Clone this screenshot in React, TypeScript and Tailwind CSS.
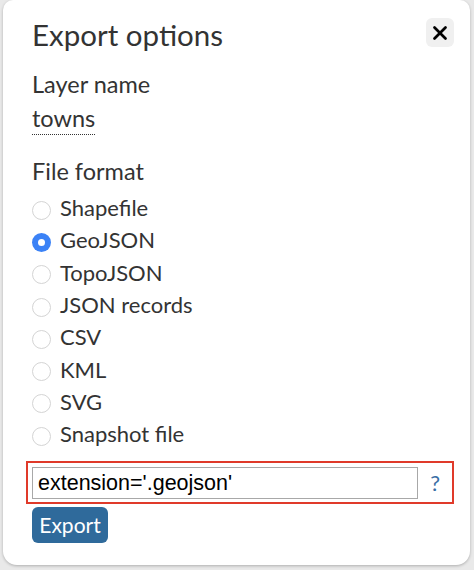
import { X } from "lucide-react";

const formats = [
  "Shapefile",
  "GeoJSON",
  "TopoJSON",
  "JSON records",
  "CSV",
  "KML",
  "SVG",
  "Snapshot file",
];

function Radio({ checked }: { checked: boolean }) {
  return checked ? (
    <span className="flex h-[19px] w-[19px] shrink-0 items-center justify-center rounded-full bg-[#3b82f6]">
      <span className="h-[7px] w-[7px] rounded-full bg-white" />
    </span>
  ) : (
    <span className="h-[19px] w-[19px] shrink-0 rounded-full border border-[#d4d4d4] bg-white" />
  );
}

export default function App() {
  return (
    <div className="h-[570px] w-[474px] overflow-hidden bg-[#e9e9e9] font-['Lato',sans-serif]">
      <div className="ml-[3px] flex h-[565px] w-[467px] flex-col rounded-b-[14px] rounded-t-[10px] bg-white pl-[29px] pr-[16px] shadow-[0_1px_3px_rgba(0,0,0,0.25)]">
        <div className="mt-[17px] flex items-start justify-between">
          <h1 className="text-[29.5px] leading-[36px] text-[#333]">Export options</h1>
          <button className="mt-[1px] flex h-[29px] w-[28px] items-center justify-center rounded-[6px] bg-[#f0f0f0]">
            <X className="h-[22px] w-[22px] text-black" strokeWidth={3} />
          </button>
        </div>

        <div className="mt-[17px] text-[23.5px] leading-[28px] text-[#333]">Layer name</div>
        <div className="mt-[7px] leading-[26px]">
          <span className="border-b border-dotted border-[#333] pb-[2px] text-[23.5px] leading-[26px] text-[#333]">
            towns
          </span>
        </div>

        <div className="mt-[23px] text-[23.5px] leading-[28px] text-[#333]">File format</div>
        <div className="mt-[9px] flex flex-col">
          {formats.map((f) => (
            <label key={f} className="flex h-[32.3px] items-center gap-[9px] text-[22px] text-[#333]">
              <Radio checked={f === "GeoJSON"} />
              <span className="pb-[5px]">{f}</span>
            </label>
          ))}
        </div>

        <div className="-ml-[6px] mt-[9px] flex h-[43px] w-[428px] items-center border-2 border-[#e03a2a] pl-[4px] pr-[12px]">
          <input
            readOnly
            value="extension='.geojson'"
            className="h-[32px] w-[386px] border border-[#a8a8a8] px-[5px] font-['Liberation_Sans',sans-serif] text-[21.5px] text-black outline-none"
          />
          <span className="ml-auto text-[22px] text-[#3a6ea5]">?</span>
        </div>

        <div className="mt-[3px]">
          <button className="h-[36px] w-[76px] rounded-[6px] bg-[#2f6a9b] text-[21px] leading-[36px] text-white">
            Export
          </button>
        </div>
      </div>
    </div>
  );
}
